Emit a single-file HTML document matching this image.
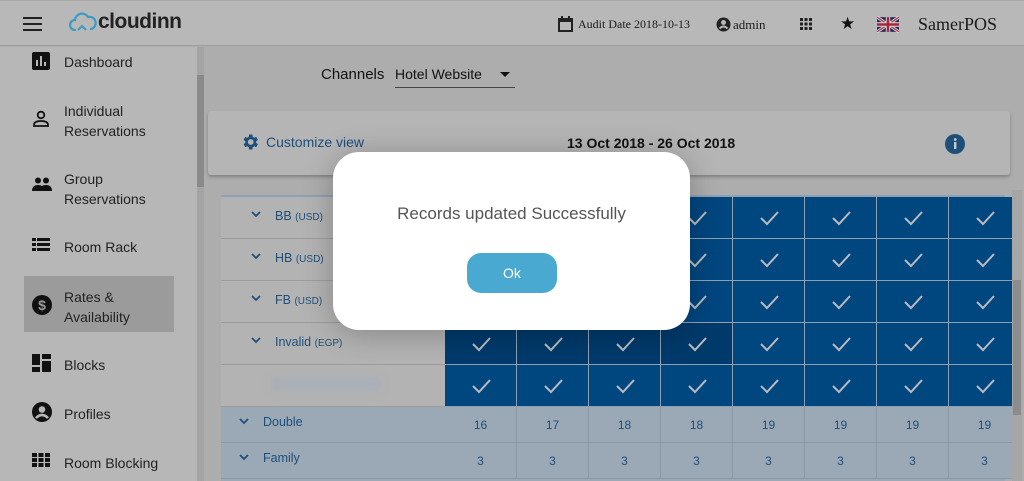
<!DOCTYPE html>
<html><head><meta charset="utf-8"><style>
*{box-sizing:border-box;margin:0;padding:0}
body{width:1024px;height:481px;overflow:hidden;background:#adadad;font-family:"Liberation Sans",Arial,sans-serif;position:relative}
.top{position:absolute;left:0;top:0;width:1024px;height:46px;background:#b8b8b8;border-bottom:1px solid #9e9e9e;border-top:1px solid #a8a8a8}
.serif{font-family:"Liberation Serif",serif;color:#1a1a1a;position:absolute}
.side{position:absolute;left:0;top:47px;width:197px;height:434px;background:#b7b7b7}
.sb{position:absolute;left:197px;top:47px;width:7px;height:434px;background:#a4a4a4}
.sb i{position:absolute;left:0;top:28px;width:7px;height:112px;background:#8a8a8a}
.item{position:absolute;left:64px;font-size:14px;color:#222;line-height:20px}
.ic{position:absolute;left:32px}
.card{position:absolute;left:208px;top:111px;width:802px;height:64px;background:#b5b5b5;border-radius:3px;box-shadow:0 2px 3px rgba(0,0,0,.25)}
.row{position:absolute;left:221px;width:224px;border-bottom:1px solid #9c9c9c;background:#b3b3b3}
.lab{position:absolute;left:54px;font-size:12.5px;color:#1e4f7a}
.lab small{font-size:10px}
.cell{position:absolute;width:72px;border-right:1px solid #8ea0b3;border-bottom:1px solid #8ea0b3;background:#00467f}
.num{position:absolute;width:72px;text-align:center;font-size:12px;color:#1e4f7a;border-right:1px solid #8c98a4;border-bottom:1px solid #8c98a4;background:#9ba8b5}
.modal{position:absolute;left:333px;top:152px;width:357px;height:178px;background:#fff;border-radius:26px;box-shadow:0 4px 30px rgba(0,0,0,.25)}
</style></head><body>
<div class="top">
 <svg style="position:absolute;left:23px;top:16px" width="19" height="14"><rect y="0" width="19" height="2" fill="#222"/><rect y="6" width="19" height="2" fill="#222"/><rect y="12" width="19" height="2" fill="#222"/></svg>
 <svg style="position:absolute;left:69px;top:10px" width="28" height="22" viewBox="0 0 28 22"><path d="M6 19a5 5 0 0 1 0-10a7 7 0 0 1 13-3a6 6 0 0 1 3 12" fill="none" stroke="#3a9cc1" stroke-width="2.2" stroke-linecap="round"/><path d="M9 19l4-4l4 4v0" fill="none" stroke="#3a9cc1" stroke-width="2"/></svg>
 <div style="position:absolute;left:98px;top:9px;font-size:21px;font-weight:bold;color:#222;letter-spacing:-0.5px">cloudinn</div>
 <svg style="position:absolute;left:558px;top:15px" width="15" height="16"><rect x="1" y="3" width="13" height="12" fill="none" stroke="#222" stroke-width="2"/><rect x="1" y="3" width="13" height="3" fill="#222"/><rect x="3" y="0" width="2" height="3" fill="#222"/><rect x="10" y="0" width="2" height="3" fill="#222"/></svg>
 <div class="serif" style="left:578px;top:16px;font-size:12px">Audit Date 2018-10-13</div>
 <svg style="position:absolute;left:716px;top:16px" width="15" height="15"><circle cx="7.5" cy="7.5" r="7" fill="#222"/><circle cx="7.5" cy="5.5" r="2.5" fill="#b8b8b8"/><path d="M3.5 11.5q4-4 8 0" stroke="#b8b8b8" stroke-width="2" fill="none"/></svg>
 <div class="serif" style="left:733px;top:16px;font-size:13px">admin</div>
 <svg style="position:absolute;left:800px;top:17px" width="12" height="12" fill="#222"><rect width="3" height="3"/><rect x="4.5" width="3" height="3"/><rect x="9" width="3" height="3"/><rect y="4.5" width="3" height="3"/><rect x="4.5" y="4.5" width="3" height="3"/><rect x="9" y="4.5" width="3" height="3"/><rect y="9" width="3" height="3"/><rect x="4.5" y="9" width="3" height="3"/><rect x="9" y="9" width="3" height="3"/></svg>
 <div style="position:absolute;left:840px;top:13px;font-size:17px;color:#111">★</div>
 <svg style="position:absolute;left:877px;top:15px" width="22" height="17" viewBox="0 0 60 40"><rect width="60" height="40" fill="#23305a"/><path d="M0 0L60 40M60 0L0 40" stroke="#ddd" stroke-width="8"/><path d="M0 0L60 40M60 0L0 40" stroke="#a3263a" stroke-width="3"/><path d="M30 0v40M0 20h60" stroke="#ddd" stroke-width="12"/><path d="M30 0v40M0 20h60" stroke="#a3263a" stroke-width="7"/></svg>
 <div class="serif" style="left:918px;top:13px;font-size:18px">SamerPOS</div>
</div>
<div class="side">
 <svg class="ic" style="top:5px" width="18" height="18"><rect width="18" height="18" rx="2" fill="#111"/><rect x="4" y="8" width="2" height="6" fill="#b7b7b7"/><rect x="8" y="4" width="2" height="10" fill="#b7b7b7"/><rect x="12" y="10" width="2" height="4" fill="#b7b7b7"/></svg>
 <div class="item" style="top:5px">Dashboard</div>
 <svg class="ic" style="top:63px" width="18" height="18"><circle cx="9" cy="5" r="3.3" fill="none" stroke="#111" stroke-width="1.8"/><path d="M2 16v-1q0-4 7-4t7 4v1z" fill="none" stroke="#111" stroke-width="1.8"/></svg>
 <div class="item" style="top:54px">Individual<br>Reservations</div>
 <svg class="ic" style="top:130px" width="20" height="14"><circle cx="6" cy="3.5" r="3" fill="#111"/><circle cx="14" cy="3.5" r="3" fill="#111"/><path d="M0 14q0-6 6-6t6 6zM8 14q0-6 6-6t6 6z" fill="#111"/></svg>
 <div class="item" style="top:122px">Group<br>Reservations</div>
 <svg class="ic" style="top:191px" width="18" height="13" fill="#111"><rect width="4" height="3"/><rect x="5" width="13" height="3"/><rect y="5" width="4" height="3"/><rect x="5" y="5" width="13" height="3"/><rect y="10" width="4" height="3"/><rect x="5" y="10" width="13" height="3"/></svg>
 <div class="item" style="top:190px">Room Rack</div>
 <div style="position:absolute;left:24px;top:229px;width:150px;height:56px;background:#9b9b9b"></div>
 <svg class="ic" style="top:248px" width="20" height="20"><circle cx="10" cy="10" r="10" fill="#111"/><text x="10" y="15" text-anchor="middle" font-size="14" font-weight="bold" fill="#9b9b9b" font-family="Liberation Sans">$</text></svg>
 <div class="item" style="top:240px">Rates &amp;<br>Availability</div>
 <svg class="ic" style="top:307px" width="19" height="18" fill="#111"><rect width="8" height="11"/><rect y="13" width="8" height="5"/><rect x="10" width="9" height="5"/><rect x="10" y="7" width="9" height="11"/></svg>
 <div class="item" style="top:308px">Blocks</div>
 <svg class="ic" style="top:355px" width="20" height="20"><circle cx="10" cy="10" r="10" fill="#111"/><circle cx="10" cy="7.5" r="3.3" fill="#b7b7b7"/><path d="M4 16q6-6 12 0" stroke="#b7b7b7" stroke-width="2.6" fill="none"/></svg>
 <div class="item" style="top:357px">Profiles</div>
 <svg class="ic" style="top:406px" width="18" height="14" fill="#111"><rect width="5" height="4"/><rect x="6.5" width="5" height="4"/><rect x="13" width="5" height="4"/><rect y="5" width="5" height="4"/><rect x="6.5" y="5" width="5" height="4"/><rect x="13" y="5" width="5" height="4"/><rect y="10" width="5" height="4"/><rect x="6.5" y="10" width="5" height="4"/><rect x="13" y="10" width="5" height="4"/></svg>
 <div class="item" style="top:406px">Room Blocking</div>
</div>
<div class="sb"><i></i></div>
<div style="position:absolute;left:321px;top:66px;font-size:15px;color:#111">Channels</div>
<div style="position:absolute;left:395px;top:66px;font-size:14px;color:#111">Hotel Website</div>
<div style="position:absolute;left:500px;top:72px;width:0;height:0;border-left:5px solid transparent;border-right:5px solid transparent;border-top:5px solid #111"></div>
<div style="position:absolute;left:395px;top:87px;width:120px;height:1px;background:#444"></div>
<div class="card">
 <svg style="position:absolute;left:32px;top:21px" width="20" height="20" viewBox="0 0 24 24"><path fill="#1e4f7a" d="M19.4 13a7.5 7.5 0 0 0 0-2l2.1-1.6-2-3.5-2.5 1a7 7 0 0 0-1.7-1L14.9 3h-4l-.4 2.9a7 7 0 0 0-1.7 1l-2.5-1-2 3.5L6.4 11a7.5 7.5 0 0 0 0 2l-2.1 1.6 2 3.5 2.5-1a7 7 0 0 0 1.7 1l.4 2.9h4l.4-2.9a7 7 0 0 0 1.7-1l2.5 1 2-3.5zM12.9 15.5a3.5 3.5 0 1 1 0-7a3.5 3.5 0 0 1 0 7z"/></svg>
 <div style="position:absolute;left:58px;top:23px;font-size:14px;color:#1e4f7a">Customize view</div>
 <div style="position:absolute;left:359px;top:24px;font-size:14px;color:#111;font-weight:bold">13 Oct 2018 - 26 Oct 2018</div>
 <svg style="position:absolute;left:737px;top:23px" width="20" height="20"><circle cx="10" cy="10" r="10" fill="#1e4f7a"/><rect x="9" y="8" width="2.4" height="7" fill="#c8c8c8"/><circle cx="10.2" cy="5.5" r="1.4" fill="#c8c8c8"/></svg>
</div>
<div style="position:absolute;left:221px;top:195px;width:784px;height:2px;background:#8ea0b3"></div>
<div class="row" style="top:197px;height:42px"><span class="lab" style="top:12px">BB <small>(USD)</small></span></div>
<div class="row" style="top:239px;height:42px"><span class="lab" style="top:12px">HB <small>(USD)</small></span></div>
<div class="row" style="top:281px;height:42px"><span class="lab" style="top:12px">FB <small>(USD)</small></span></div>
<div class="row" style="top:323px;height:42px"><span class="lab" style="top:12px">Invalid <small>(EGP)</small></span></div>
<div class="row" style="top:365px;height:42px"><div style="position:absolute;left:50px;top:12px;width:110px;height:14px;background:#a8afb7;filter:blur(4px)"></div></div>
<svg style="position:absolute;left:250px;top:207px" width="12" height="150" fill="none" stroke="#1e4f7a" stroke-width="1.8"><path d="M2 5l4 4l4-4M2 47l4 4l4-4M2 89l4 4l4-4M2 131l4 4l4-4"/></svg>
<div class="row" style="top:407px;height:36px;background:#9ba8b5;border-color:#8c98a4"><span class="lab" style="left:42px;top:8px;color:#1e4f7a">Double</span></div>
<div class="row" style="top:443px;height:36px;background:#9ba8b5;border-color:#8c98a4"><span class="lab" style="left:42px;top:8px">Family</span></div>
<svg style="position:absolute;left:238px;top:416px" width="12" height="50" fill="none" stroke="#1e4f7a" stroke-width="1.8"><path d="M2 3l4 4l4-4M2 39l4 4l4-4"/></svg>
<div style="position:absolute;left:221px;top:479px;width:784px;height:2px;background:#9ba8b5"></div>
<div id="grid"></div>
<div style="position:absolute;left:1012px;top:190px;width:10px;height:291px;background:#a6a6a6"></div>
<div style="position:absolute;left:1013px;top:280px;width:8px;height:135px;background:#8c8c8c"></div>
<div class="modal">
 <div style="position:absolute;left:0;width:357px;top:52px;text-align:center;font-size:17px;color:#555">Records updated Successfully</div>
 <div style="position:absolute;left:134px;top:101px;width:90px;height:40px;background:#49a9d0;border-radius:14px;color:#fff;font-size:14px;text-align:center;line-height:40px">Ok</div>
</div>
<script>
var h='',xs=[445,517,589,661,733,805,877,949],d=[16,17,18,18,19,19,19,19];
for(var c=0;c<8;c++){for(var r=0;r<5;r++){var bg=(c<4&&r==3)?'#003a6b':'#00467f';h+='<div class="cell" style="left:'+xs[c]+'px;top:'+(197+r*42)+'px;height:42px;background:'+bg+'"><svg width="72" height="42"><path d="M28 21l6 6l11-12" fill="none" stroke="#b8bcc2" stroke-width="2"/></svg></div>';}
h+='<div class="num" style="left:'+xs[c]+'px;top:407px;height:36px;line-height:36px">'+d[c]+'</div><div class="num" style="left:'+xs[c]+'px;top:443px;height:36px;line-height:36px">3</div>';}
document.getElementById('grid').innerHTML=h;
</script>
</body></html>
